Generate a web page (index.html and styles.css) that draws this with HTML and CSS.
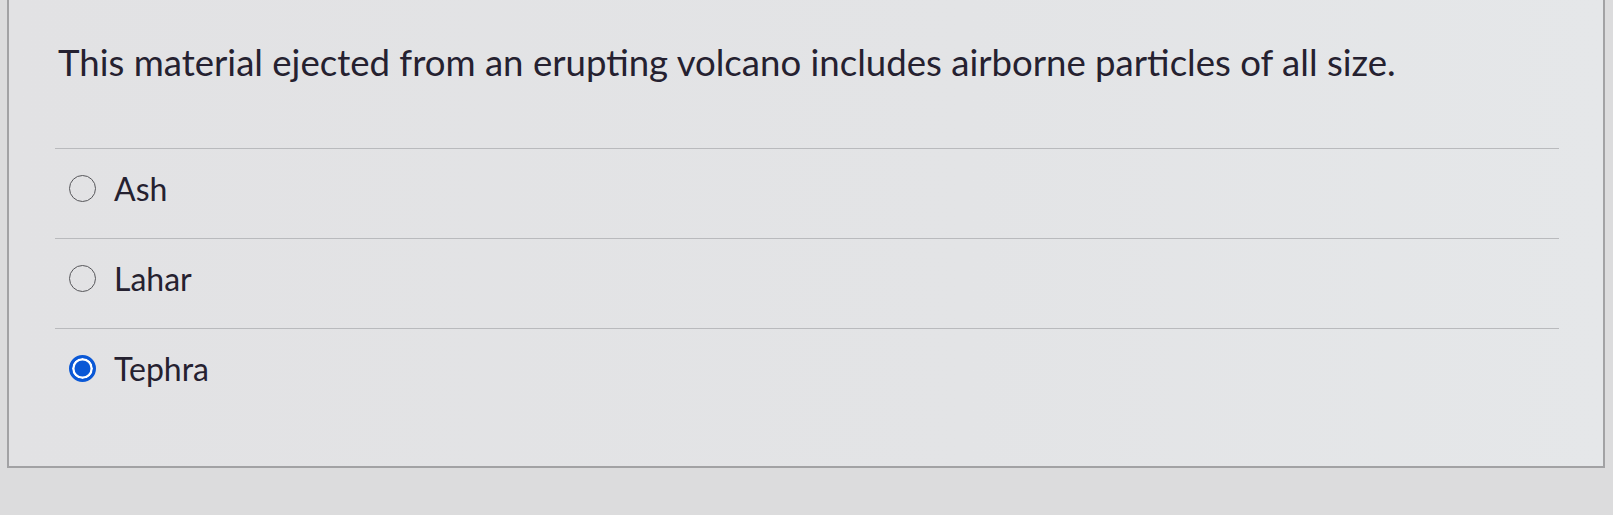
FILE: index.html
```html
<!DOCTYPE html>
<html lang="en">
<head>
<meta charset="utf-8">
<title>Quiz question</title>
<link rel="stylesheet" href="styles.css">
</head>
<body>
<div class="page">
  <div class="question-box">
    <div class="question-text">This material ejected from an erupting volcano includes airborne particles of all size.</div>
    <div class="answers">
      <label class="answer">
        <span class="radio"></span>
        <span class="answer-label">Ash</span>
      </label>
      <label class="answer">
        <span class="radio"></span>
        <span class="answer-label">Lahar</span>
      </label>
      <label class="answer">
        <span class="radio radio-checked"></span>
        <span class="answer-label">Tephra</span>
      </label>
    </div>
  </div>
</div>
</body>
</html>
```

FILE: styles.css
```css
html, body {
  margin: 0;
  padding: 0;
}
body {
  background: #dcdcdd;
  font-family: Lato, "Open Sans", sans-serif;
  color: #252130;
  width: 1613px;
  height: 515px;
  overflow: hidden;
}
.page {
  padding-left: 7px;
}
.question-box {
  box-sizing: border-box;
  width: 1598px;
  height: 468px;
  background: linear-gradient(90deg, #e2e2e4 0%, #e3e4e6 60%, #e5e7e9 100%);
  border-left: 2px solid #a2a2a4;
  border-right: 2px solid #a2a2a4;
  border-bottom: 2px solid #a2a2a4;
  padding: 40px 44px 0 46px;
}
.question-text {
  font-size: 36.6px;
  line-height: 44px;
  padding-left: 3px;
  margin-bottom: 64px;
}
.answers {
  display: flex;
  flex-direction: column;
}
.answer {
  height: 90px;
  box-sizing: border-box;
  display: flex;
  align-items: center;
  padding: 0 0 10px 14px;
  border-top: 1.5px solid #b9babd;
  gap: 18px;
}
.radio {
  box-sizing: border-box;
  width: 27px;
  height: 27px;
  border-radius: 50%;
  border: 1.5px solid #56565a;
  flex: none;
}
.radio-checked {
  border: 3px solid #0a58d6;
  background: #0a58d6;
  box-shadow: inset 0 0 0 2.5px #ffffff;
}
.answer-label {
  font-size: 32px;
  line-height: 40px;
}
```
